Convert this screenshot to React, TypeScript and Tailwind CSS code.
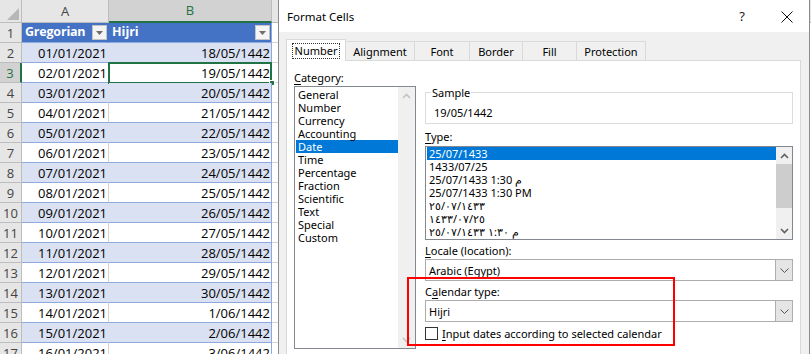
import React from "react";

const data: [string, string][] = [
  ["01/01/2021", "18/05/1442"],
  ["02/01/2021", "19/05/1442"],
  ["03/01/2021", "20/05/1442"],
  ["04/01/2021", "21/05/1442"],
  ["05/01/2021", "22/05/1442"],
  ["06/01/2021", "23/05/1442"],
  ["07/01/2021", "24/05/1442"],
  ["08/01/2021", "25/05/1442"],
  ["09/01/2021", "26/05/1442"],
  ["10/01/2021", "27/05/1442"],
  ["11/01/2021", "28/05/1442"],
  ["12/01/2021", "29/05/1442"],
  ["13/01/2021", "30/05/1442"],
  ["14/01/2021", "1/06/1442"],
  ["15/01/2021", "2/06/1442"],
  ["16/01/2021", "3/06/1442"],
];

const categories = [
  "General",
  "Number",
  "Currency",
  "Accounting",
  "Date",
  "Time",
  "Percentage",
  "Fraction",
  "Scientific",
  "Text",
  "Special",
  "Custom",
];

const types = [
  "25/07/1433",
  "1433/07/25",
  "25/07/1433 1:30 م",
  "25/07/1433 1:30 PM",
  "٢٥/٠٧/١٤٣٣",
  "١٤٣٣/٠٧/٢٥",
  "٢٥/٠٧/١٤٣٣ ١:٣٠ م",
];

function FilterBtn() {
  return (
    <div className="w-[15px] h-[15px] bg-[#f4f4f4] border border-[#c4c4c4] flex items-center justify-center">
      <svg width="7" height="4" viewBox="0 0 7 4">
        <path d="M0 0h7L3.5 4z" fill="#6d6d6d" />
      </svg>
    </div>
  );
}

function DataRow({ n, a, b }: { n: number; a: string; b: string }) {
  const band = n % 2 === 0;
  const sel = n === 3;
  return (
    <div className="flex h-[20px] shrink-0">
      <div
        className={
          sel
            ? "w-[22px] shrink-0 bg-[#d2d2d2] border-b border-b-[#bdbdbd] border-r-2 border-r-[#217346] text-[#217346] flex items-center justify-center pt-[1px]"
            : "w-[22px] shrink-0 bg-[#e6e6e6] border-b border-r border-[#bdbdbd] text-[#444] flex items-center justify-center pt-[1px]"
        }
      >
        {n}
      </div>
      <div
        className={
          band
            ? "w-[87px] shrink-0 bg-[#d9e1f2] border-b border-b-[#8ea9db] border-r border-r-[#d9e1f2] flex items-center justify-end pr-[1px] pt-[1px]"
            : "w-[87px] shrink-0 bg-white border-b border-b-[#8ea9db] border-r border-r-[#d4d4d4] flex items-center justify-end pr-[1px] pt-[1px]"
        }
      >
        {a}
      </div>
      <div
        className={
          band
            ? "relative w-[163px] shrink-0 bg-[#d9e1f2] border-b border-r border-[#8ea9db] flex items-center justify-end pr-[1px] pt-[1px]"
            : "relative w-[163px] shrink-0 bg-white border-b border-r border-[#8ea9db] flex items-center justify-end pr-[1px] pt-[1px]"
        }
      >
        {b}
        {sel && (
          <>
            <div className="absolute left-[-1px] top-[-1px] right-[-1px] bottom-[-2px] border-2 border-[#217346]" />
            <div className="absolute right-[-4px] bottom-[-4px] w-[6px] h-[6px] bg-[#217346] border border-white" />
          </>
        )}
      </div>
      <div className="flex-1 bg-white border-b border-[#d4d4d4]" />
    </div>
  );
}

function Sheet() {
  return (
    <div className="w-[278px] shrink-0 h-[354px] overflow-hidden bg-white text-[13px] font-['Open_Sans',sans-serif] text-black leading-none flex flex-col">
      <div className="flex h-[23px] shrink-0">
        <div className="w-[22px] shrink-0 bg-[#e6e6e6] border-r border-b border-[#bdbdbd] flex items-end justify-end pr-[2px] pb-[2px]">
          <svg width="12" height="12" viewBox="0 0 12 12">
            <path d="M12 0V12H0z" fill="#b7b7b7" />
          </svg>
        </div>
        <div className="w-[87px] shrink-0 bg-[#e6e6e6] border-r border-b border-[#bdbdbd] flex items-center justify-center text-[#444]">
          A
        </div>
        <div className="w-[163px] shrink-0 bg-[#d2d2d2] border-r border-r-[#bdbdbd] border-b-2 border-b-[#217346] flex items-center justify-center text-[#217346]">
          B
        </div>
        <div className="flex-1 bg-[#e6e6e6] border-b border-[#bdbdbd]" />
      </div>
      <div className="flex h-[20px] shrink-0">
        <div className="w-[22px] shrink-0 bg-[#e6e6e6] border-b border-r border-[#bdbdbd] text-[#444] flex items-center justify-center pt-[1px]">
          1
        </div>
        <div className="w-[87px] shrink-0 bg-[#4472c4] border-b border-b-[#8ea9db] border-r border-r-[#4472c4] flex items-center pl-[3px] pr-[1px] text-white font-bold">
          <span className="text-[12.5px] tracking-[-0.2px]">Gregorian</span>
          <div className="ml-auto">
            <FilterBtn />
          </div>
        </div>
        <div className="w-[163px] shrink-0 bg-[#4472c4] border-b border-r border-[#8ea9db] flex items-center pl-[3px] pr-[1px] text-white font-bold">
          <span className="text-[12.5px]">Hijri</span>
          <div className="ml-auto">
            <FilterBtn />
          </div>
        </div>
        <div className="flex-1 bg-white border-b border-[#d4d4d4]" />
      </div>
      {data.map((d, i) => (
        <DataRow key={i} n={i + 2} a={d[0]} b={d[1]} />
      ))}
    </div>
  );
}

function Chevron({ dir, color }: { dir: "up" | "down"; color: string }) {
  return (
    <svg width="9" height="6" viewBox="0 0 9 6">
      {dir === "up" ? (
        <path d="M1 5L4.5 1.5L8 5" fill="none" stroke={color} strokeWidth="1.6" />
      ) : (
        <path d="M1 1L4.5 4.5L8 1" fill="none" stroke={color} strokeWidth="1.6" />
      )}
    </svg>
  );
}

function Combo({ value }: { value: string }) {
  return (
    <div className="h-[22px] border border-[#adadad] bg-white flex">
      <div className="flex-1 flex items-center pl-[3px] leading-[13px]">{value}</div>
      <div className="w-[17px] bg-[#e5e5e5] border-l border-[#adadad] flex items-center justify-center">
        <svg width="9" height="5" viewBox="0 0 9 5">
          <path d="M0.5 0.5L4.5 4.5L8.5 0.5" fill="none" stroke="#555" strokeWidth="1" />
        </svg>
      </div>
    </div>
  );
}

function Dialog() {
  const tabs: [string, string][] = [
    ["Alignment", "w-[69px]"],
    ["Font", "w-[55px]"],
    ["Border", "w-[53px]"],
    ["Fill", "w-[54px]"],
    ["Protection", "w-[69px]"],
  ];
  return (
    <div className="relative w-[532px] shrink-0 h-[354px] overflow-hidden bg-[#f0f0f0] border-x border-[#8c8c8c] font-['Noto_Sans',sans-serif] text-[11px] text-black leading-[15px]">
      <div className="h-[32px] bg-white flex items-center pl-[8px] pr-[16px] pt-[1px]">
        <span className="text-[11.5px]">Format Cells</span>
        <span className="ml-auto text-[13px] text-[#222] mr-[36px]">?</span>
        <svg width="12" height="12" viewBox="0 0 12 12">
          <path d="M0.5 0.5L11.5 11.5M11.5 0.5L0.5 11.5" stroke="#111" strokeWidth="1" />
        </svg>
      </div>
      <div className="pl-[7px] pr-[8px] pt-[7px]">
        <div className="flex items-end h-[21px]">
          <div className="relative z-10 w-[60px] h-[22px] -mb-[1px] bg-white border-x border-t border-[#d9d9d9] flex items-center justify-center">
            <span className="border border-dotted border-[#333] px-[2px] leading-[13px] pb-[1px]">Number</span>
          </div>
          {tabs.map(([t, w]) => (
            <div
              key={t}
              className={`${w} h-[19px] bg-[#f0f0f0] border-r border-t border-[#d9d9d9] flex items-center justify-center`}
            >
              {t}
            </div>
          ))}
        </div>
        <div className="h-[300px] bg-white border border-[#d9d9d9] flex pl-[7px] pt-[9px]">
          <div className="w-[122px] shrink-0">
            <div>
              <u className="underline-offset-2">C</u>ategory:
            </div>
            <div className="mt-[1px] h-[263px] border border-[#828790] bg-white flex">
              <div className="flex-1 pt-[1px] pl-[1px]">
                {categories.map((c) => (
                  <div
                    key={c}
                    className={
                      c === "Date"
                        ? "h-[13px] leading-[13px] px-[2px] bg-[#0078d7] text-white"
                        : "h-[13px] leading-[13px] px-[2px]"
                    }
                  >
                    {c}
                  </div>
                ))}
              </div>
              <div className="w-[17px] bg-[#f0f0f0] flex flex-col">
                <div className="h-[17px] flex items-center justify-center">
                  <Chevron dir="up" color="#c2c2c2" />
                </div>
                <div className="flex-1" />
                <div className="h-[17px] flex items-center justify-center">
                  <Chevron dir="down" color="#c2c2c2" />
                </div>
              </div>
            </div>
          </div>
          <div className="ml-[9px] w-[368px] shrink-0 pt-[22px]">
            <div className="h-[32px] border border-[#dcdcdc]">
              <span className="block w-fit -mt-[8px] ml-[5px] px-[1px] bg-white">Sample</span>
              <div className="mt-[5px] pl-[8px]">19/05/1442</div>
            </div>
            <div className="mt-[5px]">
              <u className="underline-offset-2">T</u>ype:
            </div>
            <div className="mt-[2px] h-[94px] border border-[#828790] bg-white flex">
              <div className="flex-1 pt-[0px] pl-[1px]">
                {types.map((t, i) => (
                  <div
                    key={i}
                    dir="ltr"
                    className={
                      i === 0
                        ? "h-[13px] leading-[13px] px-[2px] bg-[#0078d7] text-white whitespace-nowrap [unicode-bidi:bidi-override]"
                        : "h-[13px] leading-[13px] px-[2px] whitespace-nowrap [unicode-bidi:bidi-override]"
                    }
                  >
                    {t}
                  </div>
                ))}
              </div>
              <div className="w-[16px] bg-[#f0f0f0] flex flex-col">
                <div className="h-[17px] flex items-center justify-center">
                  <Chevron dir="up" color="#606060" />
                </div>
                <div className="flex-1">
                  <div className="h-[44px] mx-[0px] bg-[#cdcdcd]" />
                </div>
                <div className="h-[17px] flex items-center justify-center">
                  <Chevron dir="down" color="#606060" />
                </div>
              </div>
            </div>
            <div className="mt-[3px]">
              <u className="underline-offset-2">L</u>ocale (location):
            </div>
            <div className="mt-[1px]">
              <Combo value="Arabic (Egypt)" />
            </div>
            <div className="mt-[3px]">
              C<u className="underline-offset-2">a</u>lendar type:
            </div>
            <div className="mt-[1px]">
              <Combo value="Hijri" />
            </div>
            <div className="mt-[5px] flex items-center h-[13px]">
              <div className="w-[13px] h-[13px] border border-[#333] bg-white" />
              <span className="ml-[4px]">
                <u className="underline-offset-2">I</u>nput dates according to selected calendar
              </span>
            </div>
          </div>
        </div>
      </div>
      <div className="absolute left-[128px] top-[277px] w-[268px] h-[69px] border-2 border-[#ff0000]" />
    </div>
  );
}

export default function App() {
  return (
    <div className="w-[811px] h-[354px] overflow-hidden flex bg-white">
      <Sheet />
      <Dialog />
      <div className="flex-1 bg-white flex flex-col">
        <div className="h-[23px] bg-[#e6e6e6] border-b border-[#bdbdbd]" />
      </div>
    </div>
  );
}
